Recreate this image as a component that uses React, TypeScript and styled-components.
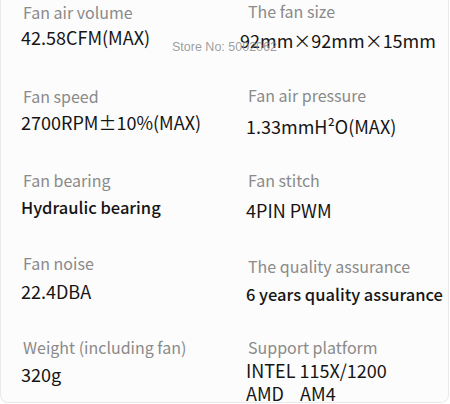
import React from "react";
import styled, { createGlobalStyle } from "styled-components";

const GlobalStyle = createGlobalStyle`
  html, body {
    margin: 0;
    padding: 0;
    background: #ffffff;
  }
  body {
    font-family: "Noto Sans CJK SC", "Noto Sans", sans-serif;
  }
`;

interface Spec {
  label: string;
  value: string;
  top: number;
  gap: number;
  bold?: boolean;
  shift?: number;
}

const specs: Spec[] = [
  { label: "Fan air volume", value: "42.58CFM(MAX)", top: 2, gap: 4 },
  { label: "The fan size", value: "92mm×92mm×15mm", top: 1, gap: 8, shift: -6 },
  { label: "Fan speed", value: "2700RPM±10%(MAX)", top: 2, gap: 5 },
  { label: "Fan air pressure", value: "1.33mmH²O(MAX)", top: 1, gap: 10 },
  { label: "Fan bearing", value: "Hydraulic bearing", top: 2, gap: 6, bold: true },
  { label: "Fan stitch", value: "4PIN PWM", top: 2, gap: 9 },
  { label: "Fan noise", value: "22.4DBA", top: 1, gap: 7 },
  { label: "The quality assurance", value: "6 years quality assurance", top: 4, gap: 7, bold: true },
  { label: "Weight (including fan)", value: "320g", top: 1, gap: 6 },
  { label: "Support platform", value: "INTEL 115X/1200\nAMD    AM4", top: 1, gap: 2 },
];

const Card = styled.div`
  position: relative;
  box-sizing: border-box;
  width: 449px;
  height: 403px;
  background: #fcfcfc;
  border: 1px solid #e9e9e9;
  border-top: none;
  border-radius: 0 0 8px 8px;
  display: grid;
  grid-template-columns: 223px 1fr;
  grid-template-rows: repeat(5, 84px);
`;

const Cell = styled.div<{ $top: number; $right?: boolean }>`
  display: flex;
  flex-direction: column;
  padding-top: ${(p) => p.$top}px;
  padding-left: ${(p) => (p.$right ? 22 : 20)}px;
`;

const Label = styled.div<{ $gap: number }>`
  font-size: 16px;
  line-height: 20px;
  color: #8a8a8a;
  margin-bottom: ${(p) => p.$gap}px;
  padding-left: 2px;
  white-space: nowrap;
`;

const Value = styled.div<{ $bold?: boolean; $shift?: number }>`
  font-size: ${(p) => (p.$bold ? 16.5 : 18)}px;
  line-height: 23px;
  color: #151515;
  font-weight: ${(p) => (p.$bold ? 500 : 400)};
  margin-left: ${(p) => p.$shift ?? 0}px;
  white-space: pre;
`;

const Watermark = styled.div`
  position: absolute;
  left: 171px;
  top: 40px;
  font-family: "Liberation Sans", Arial, sans-serif;
  font-size: 12.5px;
  color: rgba(140, 140, 140, 0.85);
  pointer-events: none;
`;

export default function App() {
  return (
    <>
      <GlobalStyle />
      <Card>
        {specs.map((s, i) => (
          <Cell key={s.label} $top={s.top} $right={i % 2 === 1}>
            <Label $gap={s.gap}>{s.label}</Label>
            <Value $bold={s.bold} $shift={s.shift}>
              {s.value}
            </Value>
          </Cell>
        ))}
        <Watermark>Store No: 5002062</Watermark>
      </Card>
    </>
  );
}
